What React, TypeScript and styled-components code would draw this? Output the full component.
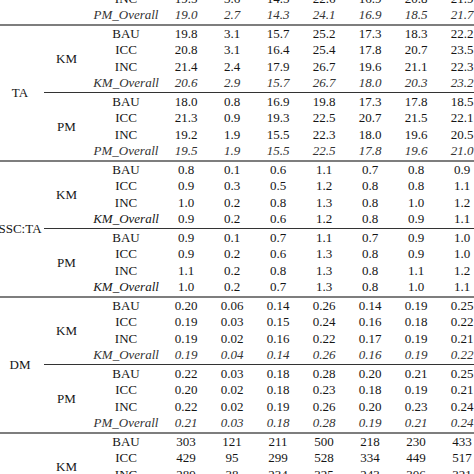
import React from 'react'
import styled, { createGlobalStyle } from 'styled-components'

const GlobalStyle = createGlobalStyle`
  html, body {
    margin: 0;
    padding: 0;
    overflow: hidden;
    background: #fff;
  }
  body {
    font-family: "Liberation Serif", "Times New Roman", serif;
    font-size: 13px;
    color: #151515;
  }
`

const Page = styled.div`
  margin: -9.5px 0 0 -4px;
  width: 500px;
`

const Group = styled.div<{ $divided: boolean }>`
  display: flex;
  border-top: ${({ $divided }) => ($divided ? '2px solid #7e7e7e' : 'none')};
`

const GroupLabel = styled.div`
  width: 48px;
  flex: none;
  display: flex;
  align-items: center;
  justify-content: center;
  white-space: nowrap;
`

const SubList = styled.div`
  flex: 1;
  display: flex;
  flex-direction: column;
`

const Sub = styled.div<{ $divided: boolean }>`
  display: flex;
  border-top: ${({ $divided }) => ($divided ? '1px solid #333' : 'none')};
  padding-top: ${({ $divided }) => ($divided ? '1px' : '0')};
`

const SubLabel = styled.div`
  width: 45px;
  flex: none;
  display: flex;
  align-items: center;
  justify-content: center;
`

const Rows = styled.div`
  flex: 1;
  display: flex;
  flex-direction: column;
`

const Row = styled.div<{ $italic: boolean }>`
  display: grid;
  grid-template-columns: 74px repeat(7, 46px);
  height: 16.5px;
  line-height: 16.5px;
  font-style: ${({ $italic }) => ($italic ? 'italic' : 'normal')};
  color: ${({ $italic }) => ($italic ? '#333' : '#151515')};
`

const Cell = styled.div<{ $italic?: boolean }>`
  text-align: center;
  white-space: nowrap;
  font-style: ${({ $italic }) => ($italic ? 'italic' : 'inherit')};
`

type RowData = { name: string; values: string[]; overall?: boolean; plainValues?: boolean }
type SubData = { label: string; rows: RowData[] }
type GroupData = { label: string; subs: SubData[] }

const groups: GroupData[] = [
  {
    label: '',
    subs: [
      {
        label: '',
        rows: [
          { name: 'INC', values: ['19.5', '3.6', '14.5', '22.6', '16.9', '20.8', '21.9'] },
          { name: 'PM_Overall', overall: true, values: ['19.0', '2.7', '14.3', '24.1', '16.9', '18.5', '21.7'] },
        ],
      },
    ],
  },
  {
    label: 'TA',
    subs: [
      {
        label: 'KM',
        rows: [
          { name: 'BAU', values: ['19.8', '3.1', '15.7', '25.2', '17.3', '18.3', '22.2'] },
          { name: 'ICC', values: ['20.8', '3.1', '16.4', '25.4', '17.8', '20.7', '23.5'] },
          { name: 'INC', values: ['21.4', '2.4', '17.9', '26.7', '19.6', '21.1', '22.3'] },
          { name: 'KM_Overall', overall: true, values: ['20.6', '2.9', '15.7', '26.7', '18.0', '20.3', '23.2'] },
        ],
      },
      {
        label: 'PM',
        rows: [
          { name: 'BAU', values: ['18.0', '0.8', '16.9', '19.8', '17.3', '17.8', '18.5'] },
          { name: 'ICC', values: ['21.3', '0.9', '19.3', '22.5', '20.7', '21.5', '22.1'] },
          { name: 'INC', values: ['19.2', '1.9', '15.5', '22.3', '18.0', '19.6', '20.5'] },
          { name: 'PM_Overall', overall: true, values: ['19.5', '1.9', '15.5', '22.5', '17.8', '19.6', '21.0'] },
        ],
      },
    ],
  },
  {
    label: 'SSC:TA',
    subs: [
      {
        label: 'KM',
        rows: [
          { name: 'BAU', values: ['0.8', '0.1', '0.6', '1.1', '0.7', '0.8', '0.9'] },
          { name: 'ICC', values: ['0.9', '0.3', '0.5', '1.2', '0.8', '0.8', '1.1'] },
          { name: 'INC', values: ['1.0', '0.2', '0.8', '1.3', '0.8', '1.0', '1.2'] },
          { name: 'KM_Overall', overall: true, plainValues: true, values: ['0.9', '0.2', '0.6', '1.2', '0.8', '0.9', '1.1'] },
        ],
      },
      {
        label: 'PM',
        rows: [
          { name: 'BAU', values: ['0.9', '0.1', '0.7', '1.1', '0.7', '0.9', '1.0'] },
          { name: 'ICC', values: ['0.9', '0.2', '0.6', '1.3', '0.8', '0.9', '1.0'] },
          { name: 'INC', values: ['1.1', '0.2', '0.8', '1.3', '0.8', '1.1', '1.2'] },
          { name: 'KM_Overall', overall: true, plainValues: true, values: ['1.0', '0.2', '0.7', '1.3', '0.8', '1.0', '1.1'] },
        ],
      },
    ],
  },
  {
    label: 'DM',
    subs: [
      {
        label: 'KM',
        rows: [
          { name: 'BAU', values: ['0.20', '0.06', '0.14', '0.26', '0.14', '0.19', '0.25'] },
          { name: 'ICC', values: ['0.19', '0.03', '0.15', '0.24', '0.16', '0.18', '0.22'] },
          { name: 'INC', values: ['0.19', '0.02', '0.16', '0.22', '0.17', '0.19', '0.21'] },
          { name: 'KM_Overall', overall: true, values: ['0.19', '0.04', '0.14', '0.26', '0.16', '0.19', '0.22'] },
        ],
      },
      {
        label: 'PM',
        rows: [
          { name: 'BAU', values: ['0.22', '0.03', '0.18', '0.28', '0.20', '0.21', '0.25'] },
          { name: 'ICC', values: ['0.20', '0.02', '0.18', '0.23', '0.18', '0.19', '0.21'] },
          { name: 'INC', values: ['0.22', '0.02', '0.19', '0.26', '0.20', '0.23', '0.24'] },
          { name: 'PM_Overall', overall: true, values: ['0.21', '0.03', '0.18', '0.28', '0.19', '0.21', '0.24'] },
        ],
      },
    ],
  },
  {
    label: '',
    subs: [
      {
        label: 'KM',
        rows: [
          { name: 'BAU', values: ['303', '121', '211', '500', '218', '230', '433'] },
          { name: 'ICC', values: ['429', '95', '299', '528', '334', '449', '517'] },
          { name: 'INC', values: ['289', '38', '234', '325', '243', '306', '321'] },
          { name: 'KM_Overall', overall: true, values: [] },
        ],
      },
    ],
  },
]

export default function App() {
  return (
    <>
      <GlobalStyle />
      <Page>
        {groups.map((g, gi) => (
          <Group key={gi} $divided={gi > 0}>
            <GroupLabel>{g.label}</GroupLabel>
            <SubList>
              {g.subs.map((s, si) => (
                <Sub key={si} $divided={si > 0}>
                  <SubLabel>{s.label}</SubLabel>
                  <Rows>
                    {s.rows.map((r, ri) => (
                      <Row key={ri} $italic={!!r.overall && !r.plainValues}>
                        <Cell $italic={!!r.overall}>{r.name}</Cell>
                        {r.values.map((v, vi) => (
                          <Cell key={vi}>{v}</Cell>
                        ))}
                      </Row>
                    ))}
                  </Rows>
                </Sub>
              ))}
            </SubList>
          </Group>
        ))}
      </Page>
    </>
  )
}
